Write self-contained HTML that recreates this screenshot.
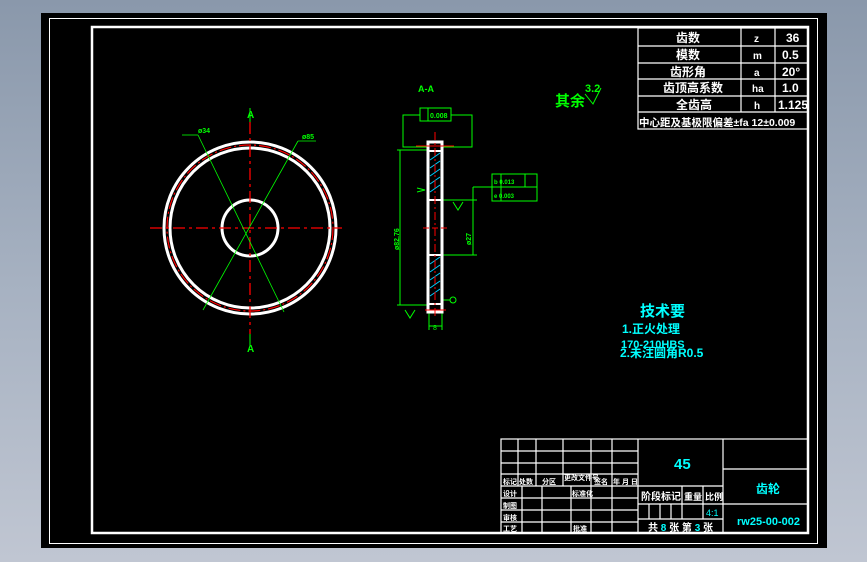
<!DOCTYPE html>
<html><head><meta charset="utf-8">
<style>
html,body{margin:0;padding:0;width:867px;height:562px;overflow:hidden;background:linear-gradient(180deg,#8a98ab 0%,#a6b1c1 50%,#c0c6d2 100%);}
svg{position:absolute;left:0;top:0}
text{font-family:"Liberation Sans","Noto Sans CJK SC",sans-serif;}
</style></head><body>
<svg width="867" height="562" viewBox="0 0 867 562" xmlns="http://www.w3.org/2000/svg">
<rect x="41" y="13" width="786" height="535" fill="#000"/>
<rect x="49.5" y="18.5" width="768" height="525" fill="none" stroke="#fff" stroke-width="1"/>
<rect x="92" y="27" width="716" height="506" fill="none" stroke="#fff" stroke-width="2.5"/>

<g fill="none">
<circle cx="250" cy="228" r="86" stroke="#fff" stroke-width="3"/>
<circle cx="250" cy="228" r="80" stroke="#fff" stroke-width="3"/>
<circle cx="250" cy="228" r="83" stroke="#f00" stroke-width="1.2" stroke-dasharray="12 3 2 3"/>
<circle cx="250" cy="228" r="28" stroke="#fff" stroke-width="3"/>
<line x1="150" y1="228" x2="342" y2="228" stroke="#f00" stroke-width="1.3" stroke-dasharray="12 4 3 4"/>
<line x1="250" y1="122" x2="250" y2="334" stroke="#f00" stroke-width="1.3" stroke-dasharray="12 4 3 4"/>
<line x1="250" y1="108" x2="250" y2="122" stroke="#0f0" stroke-width="1"/>
<line x1="250" y1="334" x2="250" y2="346" stroke="#0f0" stroke-width="1"/>
<line x1="198" y1="135" x2="284" y2="312" stroke="#0f0" stroke-width="0.8"/>
<line x1="198" y1="135" x2="182" y2="135" stroke="#0f0" stroke-width="0.8"/>
<line x1="298" y1="141" x2="203" y2="310" stroke="#0f0" stroke-width="0.8"/>
<line x1="298" y1="141" x2="316" y2="141" stroke="#0f0" stroke-width="0.8"/>
</g>
<text x="247" y="118" fill="#0f0" font-size="10" font-weight="bold">A</text>
<text x="247" y="352" fill="#0f0" font-size="10" font-weight="bold">A</text>
<text x="198" y="133" fill="#0f0" font-size="7" font-weight="bold">ø34</text>
<text x="302" y="139" fill="#0f0" font-size="7" font-weight="bold">ø85</text>

<text x="418" y="92" fill="#0f0" font-size="9" font-weight="bold">A-A</text>
<g fill="none" stroke="#0f0" stroke-width="1">
<rect x="420" y="108" width="31" height="13"/>
<line x1="428" y1="108" x2="428" y2="121"/>
<polyline points="420,115 403,115 403,147 428,147"/>
<polyline points="451,115 472,115 472,147 443,147"/>
<line x1="397" y1="150" x2="428" y2="150"/>
<line x1="397" y1="305" x2="428" y2="305"/>
<line x1="400" y1="150" x2="400" y2="305"/>
<line x1="443" y1="200" x2="477" y2="200"/>
<line x1="443" y1="255" x2="477" y2="255"/>
<line x1="473" y1="187" x2="473" y2="255"/>
<line x1="473" y1="187" x2="492" y2="187"/>
<rect x="492" y="174" width="45" height="27"/>
<line x1="492" y1="187" x2="537" y2="187"/>
<line x1="501" y1="174" x2="501" y2="201"/>
<line x1="525" y1="174" x2="525" y2="187"/>
<line x1="443" y1="300" x2="450" y2="300"/>
<circle cx="453" cy="300" r="3"/>
<line x1="429" y1="312" x2="429" y2="330"/>
<line x1="442" y1="312" x2="442" y2="330"/>
<line x1="429" y1="326" x2="442" y2="326"/>
<polyline points="405,310 410,318 415,310"/>
<polyline points="453,202 458,210 463,202"/>
<polyline points="417,188 425,190 417,192"/>
</g>
<text x="430" y="118" fill="#0f0" font-size="7" font-weight="bold">0.008</text>
<text x="494" y="184" fill="#0f0" font-size="6" font-weight="bold">b 0.013</text>
<text x="494" y="198" fill="#0f0" font-size="6" font-weight="bold">e 0.003</text>
<text x="0" y="0" fill="#0f0" font-size="7" font-weight="bold" transform="translate(399,250) rotate(-90)">ø82.76</text>
<text x="0" y="0" fill="#0f0" font-size="7" font-weight="bold" transform="translate(471,245) rotate(-90)">ø27</text>
<text x="433" y="330" fill="#0f0" font-size="7">8</text>
<g>
<rect x="428" y="142" width="14" height="170" fill="none" stroke="#fff" stroke-width="3"/>
<line x1="428" y1="151" x2="442" y2="151" stroke="#fff" stroke-width="2"/>
<line x1="428" y1="200" x2="442" y2="200" stroke="#fff" stroke-width="2"/>
<line x1="428" y1="255" x2="442" y2="255" stroke="#fff" stroke-width="2"/>
<line x1="428" y1="304" x2="442" y2="304" stroke="#fff" stroke-width="2"/>
<g stroke="#0cf" stroke-width="1">
<line x1="430" y1="160" x2="440" y2="153"/><line x1="430" y1="168" x2="440" y2="161"/><line x1="430" y1="176" x2="440" y2="169"/><line x1="430" y1="184" x2="440" y2="177"/><line x1="430" y1="192" x2="440" y2="185"/>
<line x1="430" y1="264" x2="440" y2="257"/><line x1="430" y1="272" x2="440" y2="265"/><line x1="430" y1="280" x2="440" y2="273"/><line x1="430" y1="288" x2="440" y2="281"/><line x1="430" y1="296" x2="440" y2="289"/>
</g>
<line x1="435" y1="132" x2="435" y2="318" stroke="#f00" stroke-width="1" stroke-dasharray="8 3 2 3"/>
<line x1="416" y1="146" x2="454" y2="146" stroke="#f00" stroke-width="1"/>
<line x1="425" y1="310" x2="446" y2="310" stroke="#f00" stroke-width="1"/>
<line x1="423" y1="228" x2="449" y2="228" stroke="#f00" stroke-width="1" stroke-dasharray="6 3"/>
</g>

<text x="555" y="106" fill="#0f0" font-size="15" font-weight="bold">其余</text>
<text x="585" y="92" fill="#0f0" font-size="11" font-weight="bold">3.2</text>
<polyline points="585,94 593,104 601,88" fill="none" stroke="#0f0" stroke-width="1"/>

<text x="640" y="316" fill="#0ff" font-size="15" font-weight="bold">技术要</text>
<text x="622" y="333" fill="#0ff" font-size="12" font-weight="bold">1.正火处理</text>
<text x="621" y="348" fill="#0ff" font-size="11" font-weight="bold">170-210HBS</text>
<text x="620" y="357" fill="#0ff" font-size="12" font-weight="bold">2.未注圆角R0.5</text>

<g stroke="#fff" fill="none" stroke-width="1.2">
<rect x="638" y="28" width="170" height="101"/>
<line x1="638" y1="46" x2="808" y2="46"/><line x1="638" y1="63" x2="808" y2="63"/>
<line x1="638" y1="79" x2="808" y2="79"/><line x1="638" y1="96" x2="808" y2="96"/>
<line x1="638" y1="112" x2="808" y2="112"/>
<line x1="741" y1="28" x2="741" y2="112"/><line x1="775" y1="28" x2="775" y2="112"/>
</g>
<g fill="#fff" font-size="12" font-weight="bold">
<text x="676" y="42">齿数</text><text x="754" y="42" font-size="10">z</text><text x="786" y="42">36</text>
<text x="676" y="59">模数</text><text x="753" y="59" font-size="10">m</text><text x="782" y="59">0.5</text>
<text x="670" y="76">齿形角</text><text x="754" y="76" font-size="10">a</text><text x="782" y="76">20°</text>
<text x="663" y="92">齿顶高系数</text><text x="752" y="92" font-size="10">ha</text><text x="782" y="92">1.0</text>
<text x="676" y="109">全齿高</text><text x="754" y="109" font-size="10">h</text><text x="778" y="109">1.125</text>
<text x="639" y="126" font-size="10.5">中心距及基极限偏差±fa 12±0.009</text>
</g>

<g stroke="#fff" fill="none" stroke-width="1.2">
<rect x="501" y="439" width="307" height="94"/>
<line x1="501" y1="451" x2="638" y2="451"/><line x1="501" y1="463" x2="638" y2="463"/>
<line x1="501" y1="474" x2="638" y2="474"/><line x1="501" y1="486" x2="723" y2="486"/>
<line x1="501" y1="498" x2="638" y2="498"/><line x1="501" y1="510" x2="638" y2="510"/>
<line x1="501" y1="522" x2="638" y2="522"/>
<line x1="518" y1="439" x2="518" y2="486"/><line x1="536" y1="439" x2="536" y2="486"/>
<line x1="563" y1="439" x2="563" y2="486"/><line x1="591" y1="439" x2="591" y2="533"/>
<line x1="612" y1="439" x2="612" y2="533"/>
<line x1="522" y1="486" x2="522" y2="533"/><line x1="542" y1="486" x2="542" y2="533"/>
<line x1="571" y1="486" x2="571" y2="533"/>
<line x1="638" y1="439" x2="638" y2="533"/><line x1="723" y1="439" x2="723" y2="533"/>
<line x1="638" y1="504" x2="723" y2="504"/><line x1="638" y1="519" x2="723" y2="519"/>
<line x1="682" y1="486" x2="682" y2="519"/><line x1="703" y1="486" x2="703" y2="519"/>
<line x1="649" y1="504" x2="649" y2="519"/><line x1="660" y1="504" x2="660" y2="519"/>
<line x1="671" y1="504" x2="671" y2="519"/>
<line x1="723" y1="469" x2="808" y2="469"/><line x1="723" y1="504" x2="808" y2="504"/>
</g>
<g fill="#fff" font-size="7" font-weight="bold">
<text x="503" y="484">标记</text><text x="519" y="484">处数</text><text x="542" y="484">分区</text>
<text x="564" y="480">更改文件号</text><text x="594" y="484">签名</text><text x="613" y="484">年 月 日</text>
<text x="503" y="496">设计</text><text x="572" y="496">标准化</text>
<text x="503" y="508">制图</text><text x="503" y="520">审核</text>
<text x="503" y="531">工艺</text><text x="573" y="531">批准</text>
<text x="641" y="500" font-size="10">阶段标记</text><text x="684" y="500" font-size="9">重量</text><text x="705" y="500" font-size="9">比例</text>
<text x="648" y="531" font-size="10">共 <tspan fill="#0ff">8</tspan> 张  第 <tspan fill="#0ff">3</tspan> 张</text>
</g>
<text x="674" y="469" fill="#0ff" font-size="15" font-weight="bold">45</text>
<text x="706" y="516" fill="#0ff" font-size="9">4:1</text>
<text x="756" y="493" fill="#0ff" font-size="12" font-weight="bold">齿轮</text>
<text x="737" y="525" fill="#0ff" font-size="11" font-weight="bold">rw25-00-002</text>
</svg>
</body></html>
